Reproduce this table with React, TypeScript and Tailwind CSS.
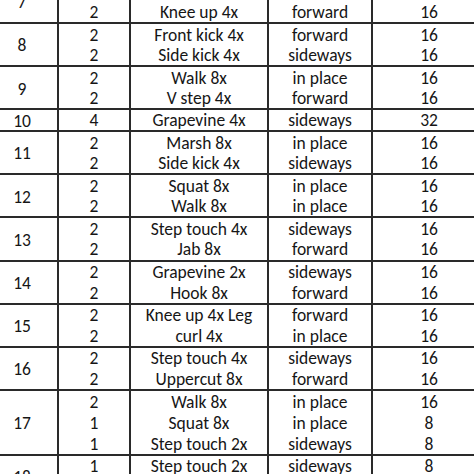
import React from "react";

type Row = { n: string; ex: string; dir: string; cnt: string };
type Group = { id: string; rows: Row[]; merged?: string[] };

const groups: Group[] = [
  { id: "7", rows: [
    { n: "2", ex: "March 8x", dir: "forward", cnt: "16" },
    { n: "2", ex: "Knee up 4x", dir: "forward", cnt: "16" },
  ] },
  { id: "8", rows: [
    { n: "2", ex: "Front kick 4x", dir: "forward", cnt: "16" },
    { n: "2", ex: "Side kick 4x", dir: "sideways", cnt: "16" },
  ] },
  { id: "9", rows: [
    { n: "2", ex: "Walk 8x", dir: "in place", cnt: "16" },
    { n: "2", ex: "V step 4x", dir: "forward", cnt: "16" },
  ] },
  { id: "10", rows: [
    { n: "4", ex: "Grapevine 4x", dir: "sideways", cnt: "32" },
  ] },
  { id: "11", rows: [
    { n: "2", ex: "Marsh 8x", dir: "in place", cnt: "16" },
    { n: "2", ex: "Side kick 4x", dir: "sideways", cnt: "16" },
  ] },
  { id: "12", rows: [
    { n: "2", ex: "Squat 8x", dir: "in place", cnt: "16" },
    { n: "2", ex: "Walk 8x", dir: "in place", cnt: "16" },
  ] },
  { id: "13", rows: [
    { n: "2", ex: "Step touch 4x", dir: "sideways", cnt: "16" },
    { n: "2", ex: "Jab 8x", dir: "forward", cnt: "16" },
  ] },
  { id: "14", rows: [
    { n: "2", ex: "Grapevine 2x", dir: "sideways", cnt: "16" },
    { n: "2", ex: "Hook 8x", dir: "forward", cnt: "16" },
  ] },
  { id: "15", merged: ["Knee up 4x Leg", "curl 4x"], rows: [
    { n: "2", ex: "", dir: "forward", cnt: "16" },
    { n: "2", ex: "", dir: "in place", cnt: "16" },
  ] },
  { id: "16", rows: [
    { n: "2", ex: "Step touch 4x", dir: "sideways", cnt: "16" },
    { n: "2", ex: "Uppercut 8x", dir: "forward", cnt: "16" },
  ] },
  { id: "17", rows: [
    { n: "2", ex: "Walk 8x", dir: "in place", cnt: "16" },
    { n: "1", ex: "Squat 8x", dir: "in place", cnt: "8" },
    { n: "1", ex: "Step touch 2x", dir: "sideways", cnt: "8" },
  ] },
  { id: "18", rows: [
    { n: "1", ex: "Step touch 2x", dir: "sideways", cnt: "8" },
    { n: "1", ex: "Squat 8x", dir: "in place", cnt: "8" },
  ] },
];

function Col({ items, className }: { items: string[]; className: string }) {
  return (
    <div className={`flex flex-col border-r-2 border-[#2a2a2a] ${className}`}>
      {items.map((t, i) => (
        <div key={i} className="flex flex-1 items-center justify-center leading-none whitespace-nowrap pt-[2px]">
          {t}
        </div>
      ))}
    </div>
  );
}

export default function App() {
  return (
    <div
      className="w-[474px] h-[474px] overflow-hidden bg-white text-[#161616] text-[17.5px]"
      style={{ fontFamily: "Carlito, Lato, 'Liberation Sans', sans-serif" }}
    >
      <div className="-ml-[14px] -mt-[19.2px] w-[501px]">
        {groups.map((g) => (
          <div
            key={g.id}
            className="flex box-border border-b-2 border-[#2a2a2a]"
            style={{ height: `${g.rows.length * 21.6}px` }}
          >
            <div className="w-[73px] flex items-center justify-center border-r-2 border-[#2a2a2a] pl-[1px] pt-[3px] leading-none">
              {g.id}
            </div>
            <Col className="w-[72px]" items={g.rows.map((r) => r.n)} />
            {g.merged ? (
              <Col className="w-[138px]" items={g.merged} />
            ) : (
              <Col className="w-[138px]" items={g.rows.map((r) => r.ex)} />
            )}
            <Col className="w-[104px]" items={g.rows.map((r) => r.dir)} />
            <Col className="w-[114px]" items={g.rows.map((r) => r.cnt)} />
          </div>
        ))}
      </div>
    </div>
  );
}
